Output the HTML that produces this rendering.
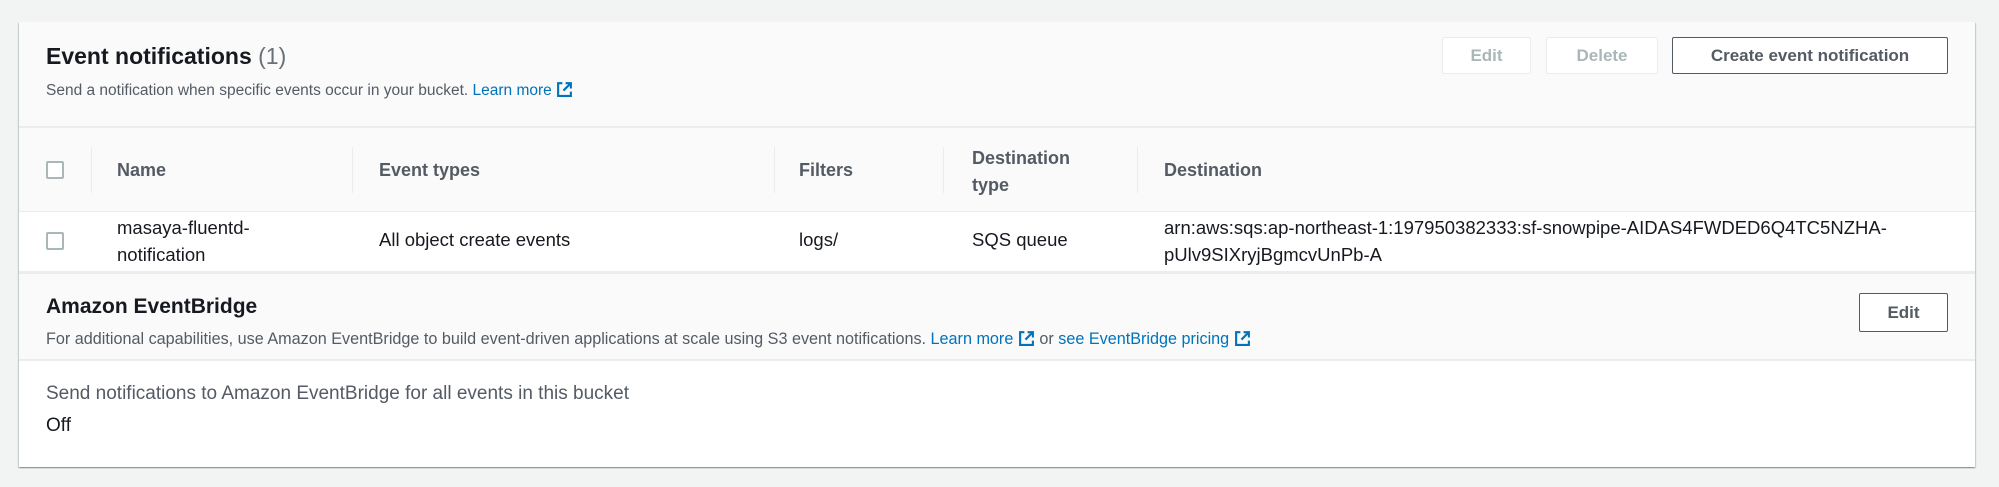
<!DOCTYPE html>
<html><head><meta charset="utf-8"><style>
*{box-sizing:border-box;margin:0;padding:0}
body{width:1999px;height:487px;background:#f2f3f3;font-family:"Liberation Sans",sans-serif;color:#16191f;position:relative;overflow:hidden}
.card{position:absolute;left:19px;top:22px;width:1956px;height:445px;background:#fafafa;box-shadow:0 1px 1px rgba(0,28,36,.3),1px 1px 1px rgba(0,28,36,.15),-1px 1px 1px rgba(0,28,36,.15)}
.abs{position:absolute;white-space:nowrap;line-height:24px}
.h{font-weight:bold;font-size:23px}
.sub{font-size:15.5px;color:#545b64}
a{color:#0073bb;text-decoration:none}
.btn{position:absolute;border:1px solid #aab7b8;background:#fff;font-weight:bold;font-size:17px;text-align:center;border-radius:2px;color:#545b64}
.dis{border-color:#eaeded;color:#aab7b8}
.line{position:absolute;left:0;width:100%;height:2px;background:#eaeded}
.th{font-weight:bold;font-size:18px;color:#545b64}
.td{font-size:18.5px;color:#16191f}
.cb{position:absolute;width:18px;height:18px;border:2px solid #aab7b8;border-radius:2px;background:#fff}
.vd{position:absolute;width:1px;height:46px;background:#eaeded;top:125px}
svg{vertical-align:-3px}
</style></head><body>
<div class="card">
  <div class="abs h" style="left:27px;top:22px">Event notifications <span style="font-weight:normal;color:#687078">(1)</span></div>
  <div class="abs sub" style="left:27px;top:57px">Send a notification when specific events occur in your bucket. <a>Learn more <svg width="17" height="17" viewBox="0 0 16 16"><path d="M6 2H2v12h12v-4" fill="none" stroke="#0073bb" stroke-width="2"/><path d="M9 2h5v5M14 2L7 9" fill="none" stroke="#0073bb" stroke-width="2"/></svg></a></div>
  <div class="btn dis" style="left:1423px;top:15px;width:89px;height:37px;line-height:35px">Edit</div>
  <div class="btn dis" style="left:1527px;top:15px;width:112px;height:37px;line-height:35px">Delete</div>
  <div class="btn" style="left:1653px;top:15px;width:276px;height:37px;line-height:35px;border-color:#545b64;color:#545b64">Create event notification</div>
  <div class="line" style="top:104px;height:2px"></div>
  <div class="cb" style="left:27px;top:139px"></div>
  <div class="vd" style="left:72px"></div><div class="vd" style="left:333px"></div><div class="vd" style="left:755px"></div><div class="vd" style="left:924px"></div><div class="vd" style="left:1118px"></div>
  <div class="abs th" style="left:98px;top:136px">Name</div>
  <div class="abs th" style="left:360px;top:136px">Event types</div>
  <div class="abs th" style="left:780px;top:136px">Filters</div>
  <div class="abs th" style="left:953px;top:123px;line-height:27px">Destination<br>type</div>
  <div class="abs th" style="left:1145px;top:136px">Destination</div>
  <div style="position:absolute;left:0;top:189px;width:100%;height:61px;background:#fff;border-top:1px solid #eaeded"></div>
  <div class="cb" style="left:27px;top:210px"></div>
  <div class="abs td" style="left:98px;top:192px;line-height:27px">masaya-fluentd-<br>notification</div>
  <div class="abs td" style="left:360px;top:206px">All object create events</div>
  <div class="abs td" style="left:780px;top:206px">logs/</div>
  <div class="abs td" style="left:953px;top:206px">SQS queue</div>
  <div class="abs td" style="left:1145px;top:192px;line-height:27px">arn:aws:sqs:ap-northeast-1:197950382333:sf-snowpipe-AIDAS4FWDED6Q4TC5NZHA-<br>pUlv9SIXryjBgmcvUnPb-A</div>
  <div class="line" style="top:249px;height:3px"></div>
  <div class="abs h" style="left:27px;top:273px;font-size:21px">Amazon EventBridge</div>
  <div class="abs sub" style="left:27px;top:305px;font-size:16.2px">For additional capabilities, use Amazon EventBridge to build event-driven applications at scale using S3 event notifications. <a>Learn more <svg width="17" height="17" viewBox="0 0 16 16"><path d="M6 2H2v12h12v-4" fill="none" stroke="#0073bb" stroke-width="2"/><path d="M9 2h5v5M14 2L7 9" fill="none" stroke="#0073bb" stroke-width="2"/></svg></a> or <a>see EventBridge pricing <svg width="17" height="17" viewBox="0 0 16 16"><path d="M6 2H2v12h12v-4" fill="none" stroke="#0073bb" stroke-width="2"/><path d="M9 2h5v5M14 2L7 9" fill="none" stroke="#0073bb" stroke-width="2"/></svg></a></div>
  <div class="btn" style="left:1840px;top:271px;width:89px;height:39px;line-height:37px;border-color:#545b64">Edit</div>
  <div style="position:absolute;left:0;top:337px;width:100%;height:108px;background:#fff;border-top:2px solid #eaeded"></div>
  <div class="abs" style="left:27px;top:360px;font-size:19px;color:#545b64">Send notifications to Amazon EventBridge for all events in this bucket</div>
  <div class="abs" style="left:27px;top:392px;font-size:19px">Off</div>
</div>
</body></html>
